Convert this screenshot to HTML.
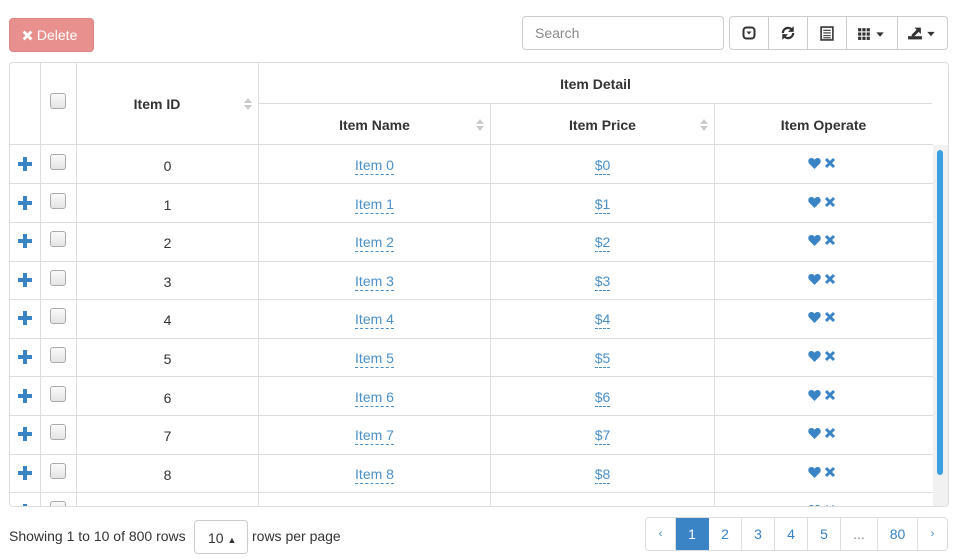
<!DOCTYPE html>
<html><head><meta charset="utf-8"><style>
*{box-sizing:border-box}
body{margin:0;width:960px;height:560px;background:#fff;font-family:"Liberation Sans",sans-serif;font-size:14px;color:#333;position:relative;overflow:hidden}
.abs{position:absolute}
.del{left:9px;top:18px;width:85px;height:34px;background:#e8908e;border:1px solid #de8683;border-radius:4px;color:#fff;font-size:14px;line-height:32px;padding-left:12px}
.search{left:522px;top:16px;width:202px;height:34px;border:1px solid #ccc;border-radius:4px;padding-left:12px;line-height:32px;color:#888}
.btns{left:729px;top:16px;width:219px;height:34px;border:1px solid #ccc;border-radius:4px;display:flex}
.btns div{border-right:1px solid #ccc;height:32px;display:flex;align-items:center;justify-content:center}
.btns div:last-child{border-right:none}
.wrap{left:9px;top:62px;width:940px;height:445px;border:1px solid #ddd;border-radius:4px;overflow:hidden}
.line{position:absolute;background:#ddd}
.th{position:absolute;font-weight:bold;text-align:center;font-size:14px}
.cell{position:absolute;text-align:center;font-size:14px}
.lnk{color:#4a90c8;border-bottom:1px dashed #4a90c8;padding-bottom:1px}
.cb{position:absolute;width:16px;height:16px;border:1px solid #aaa;border-radius:3px;background:linear-gradient(#fafafa,#e4e4e4)}
.sort{position:absolute;width:8px;height:14px}
.pg{right:12px;top:517px;height:34px;border:1px solid #ddd;border-radius:4px;display:flex}
.pg div{border-right:1px solid #ddd;height:32px;line-height:32px;text-align:center;color:#3a84c6;font-size:14px}
.pg div:last-child{border-right:none}
</style></head><body>
<div class="abs del"><svg width="11" height="11" viewBox="0 0 10 10" style="vertical-align:-1px"><path d="M1.5 1.5l7 7M8.5 1.5l-7 7" stroke="#fff" stroke-width="2.6"/></svg> Delete</div>
<div class="abs search">Search</div>
<div class="abs btns">
<div style="width:39px"><svg width="14" height="14" viewBox="0 0 14 14"><rect x="1.5" y="1.5" width="11" height="11" rx="3" fill="none" stroke="#333" stroke-width="2"/><path d="M4.5 5.5h5L7 8.5z" fill="#333"/></svg></div>
<div style="width:39px"><svg width="16" height="16" viewBox="0 0 14 14"><path d="M2.5 7a4.5 4.5 0 0 1 8-2.8M11.5 7a4.5 4.5 0 0 1-8 2.8" fill="none" stroke="#333" stroke-width="2"/><path d="M12 1v5H7zM2 13V8h5z" fill="#333"/></svg></div>
<div style="width:39px"><svg width="14" height="15" viewBox="0 0 13 14"><rect x="1" y="1" width="11" height="12" fill="none" stroke="#333" stroke-width="1.5"/><path d="M3 4h7M3 6.5h7M3 9h7M3 11h7" stroke="#333" stroke-width="1"/></svg></div>
<div style="width:51px"><svg width="30" height="15" viewBox="0 0 28 14"><g fill="#333"><rect x="1" y="2" width="3" height="3"/><rect x="5" y="2" width="3" height="3"/><rect x="9" y="2" width="3" height="3"/><rect x="1" y="6" width="3" height="3"/><rect x="5" y="6" width="3" height="3"/><rect x="9" y="6" width="3" height="3"/><rect x="1" y="10" width="3" height="3"/><rect x="5" y="10" width="3" height="3"/><rect x="9" y="10" width="3" height="3"/><path d="M18 6h7l-3.5 4z"/></g></svg></div>
<div style="width:49px"><svg width="32" height="16" viewBox="0 0 30 14"><g fill="#333"><rect x="1" y="10" width="13" height="3"/><path d="M4 9l5-5-2-2h6v6l-2-2-5 5z"/><path d="M19 6h7l-3.5 4z"/></g></svg></div>
</div>
<div class="abs wrap">
<div style="position:absolute;left:923px;top:82px;width:16px;height:363px;background:#f1f1f1"></div>
<div style="position:absolute;left:927px;top:87px;width:6px;height:325px;background:#3aa0e0;border-radius:3px"></div>
<div class="line" style="left:248px;top:40px;width:674px;height:1px"></div>
<div class="line" style="left:0;top:81px;width:923px;height:1px"></div>
<div class="line" style="left:30px;top:0;width:1px;height:445px"></div>
<div class="line" style="left:66px;top:0;width:1px;height:445px"></div>
<div class="line" style="left:248px;top:0;width:1px;height:445px"></div>
<div class="line" style="left:480px;top:41px;width:1px;height:404px"></div>
<div class="line" style="left:704px;top:41px;width:1px;height:404px"></div>
<div class="cb" style="left:40px;top:30px"></div>
<div class="th" style="left:67px;width:160px;top:33px">Item ID</div>
<svg class="sort" style="left:234px;top:34px" viewBox="0 0 8 14"><path d="M0 6l4-5 4 5zM0 8l4 5 4-5z" fill="#ccc"/></svg>
<div class="th" style="left:249px;width:673px;top:13px">Item Detail</div>
<div class="th" style="left:249px;width:231px;top:54px">Item Name</div>
<svg class="sort" style="left:466px;top:55px" viewBox="0 0 8 14"><path d="M0 6l4-5 4 5zM0 8l4 5 4-5z" fill="#ccc"/></svg>
<div class="th" style="left:481px;width:223px;top:54px">Item Price</div>
<svg class="sort" style="left:690px;top:55px" viewBox="0 0 8 14"><path d="M0 6l4-5 4 5zM0 8l4 5 4-5z" fill="#ccc"/></svg>
<div class="th" style="left:705px;width:217px;top:54px">Item Operate</div>
<div id="rows"></div>
</div>
<div class="abs" style="left:9px;top:528px">Showing 1 to 10 of 800 rows</div>
<div class="abs" style="left:194px;top:520px;width:54px;height:34px;border:1px solid #ccc;border-radius:4px;padding:9px 0 0 13px">10 <span style="font-size:9px">▲</span></div>
<div class="abs" style="left:252px;top:528px">rows per page</div>
<div class="abs pg">
<div style="width:30px;font-size:11px">‹</div>
<div style="width:33px;background:#3a84c6;color:#fff;border-color:#3a84c6">1</div>
<div style="width:33px">2</div><div style="width:33px">3</div><div style="width:33px">4</div><div style="width:33px">5</div>
<div style="width:37px;color:#888">...</div><div style="width:40px">80</div><div style="width:29px;font-size:11px">›</div>
</div>
<script>
var h='';for(var i=0;i<10;i++){var t=82+i*38.6;
h+='<div class="line" style="left:0;top:'+(t+38.3)+'px;width:923px;height:1px"></div>'+
'<svg style="position:absolute;left:8px;top:'+(t+12)+'px" width="14" height="14" viewBox="0 0 14 14"><path d="M5 0h4v5h5v4H9v5H5V9H0V5h5z" fill="#3a84c6"/></svg>'+
'<div class="cb" style="left:40px;top:'+(t+9)+'px"></div>'+
'<div class="cell" style="left:67px;width:181px;top:'+(t+13)+'px">'+i+'</div>'+
'<div class="cell" style="left:249px;width:231px;top:'+(t+12)+'px"><span class="lnk">Item '+i+'</span></div>'+
'<div class="cell" style="left:481px;width:223px;top:'+(t+12)+'px"><span class="lnk">$'+i+'</span></div>'+
'<svg style="position:absolute;left:798px;top:'+(t+12)+'px" width="30" height="13" viewBox="0 0 30 13"><path d="M6.5 12L1.2 6.6C-0.5 4.8 0.2 1.2 3.2 1 4.8 0.9 5.8 1.8 6.5 2.8 7.2 1.8 8.2 0.9 9.8 1 12.8 1.2 13.5 4.8 11.8 6.6z" fill="#3a84c6"/><path d="M18 2l8 8M26 2l-8 8" stroke="#3a84c6" stroke-width="3"/></svg>';}
document.getElementById('rows').innerHTML=h;
</script>
</body></html>
